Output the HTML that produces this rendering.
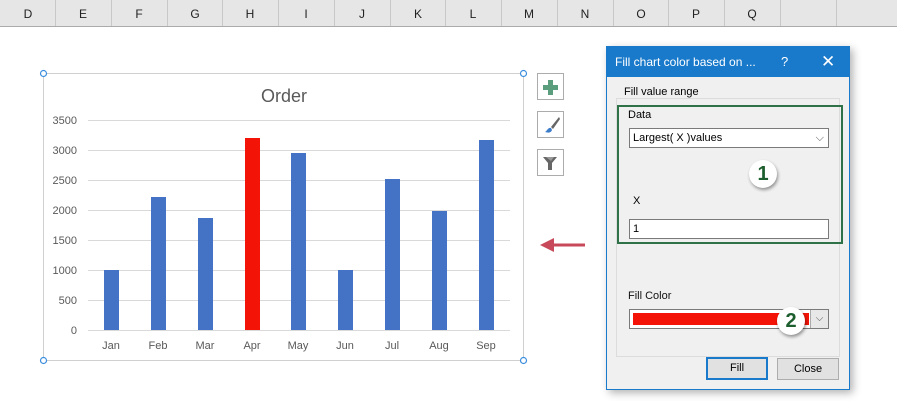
<!DOCTYPE html>
<html><head><style>
body{margin:0;width:897px;height:401px;overflow:hidden;background:#fff;font-family:"Liberation Sans",sans-serif;position:relative}
.a{position:absolute}
</style></head><body>
<div class="a" style="left:0;top:0;width:897px;height:26px;background:#e6e6e6;border-bottom:1px solid #ababab"></div>
<svg class="a" style="left:0;top:0" width="897" height="401">
<g stroke="#c8c8c8">
<line x1="55.5" y1="0" x2="55.5" y2="26"/><line x1="111.5" y1="0" x2="111.5" y2="26"/><line x1="167.5" y1="0" x2="167.5" y2="26"/><line x1="222.5" y1="0" x2="222.5" y2="26"/><line x1="278.5" y1="0" x2="278.5" y2="26"/><line x1="334.5" y1="0" x2="334.5" y2="26"/><line x1="390.5" y1="0" x2="390.5" y2="26"/><line x1="445.5" y1="0" x2="445.5" y2="26"/><line x1="501.5" y1="0" x2="501.5" y2="26"/><line x1="557.5" y1="0" x2="557.5" y2="26"/><line x1="613.5" y1="0" x2="613.5" y2="26"/><line x1="668.5" y1="0" x2="668.5" y2="26"/><line x1="724.5" y1="0" x2="724.5" y2="26"/><line x1="780.5" y1="0" x2="780.5" y2="26"/><line x1="836.5" y1="0" x2="836.5" y2="26"/>
</g>
<g font-size="12" fill="#222" text-anchor="middle">
<text x="28" y="18">D</text><text x="83" y="18">E</text><text x="139" y="18">F</text><text x="195" y="18">G</text><text x="250" y="18">H</text><text x="306" y="18">I</text><text x="362" y="18">J</text><text x="418" y="18">K</text><text x="473" y="18">L</text><text x="529" y="18">M</text><text x="585" y="18">N</text><text x="641" y="18">O</text><text x="696" y="18">P</text><text x="752" y="18">Q</text>
</g>
<rect x="43.5" y="73.5" width="480" height="287" fill="#fff" stroke="#d0d0d0"/>
<g fill="#fff" stroke="#3b8ede" stroke-width="1.2"><circle cx="43.5" cy="73.5" r="3"/><circle cx="523.5" cy="73.5" r="3"/><circle cx="43.5" cy="360.5" r="3"/><circle cx="523.5" cy="360.5" r="3"/></g>
<text x="284" y="102" font-size="18" fill="#595959" text-anchor="middle">Order</text>
<g stroke="#d9d9d9"><line x1="88" y1="120.5" x2="510" y2="120.5"/><line x1="88" y1="150.5" x2="510" y2="150.5"/><line x1="88" y1="180.5" x2="510" y2="180.5"/><line x1="88" y1="210.5" x2="510" y2="210.5"/><line x1="88" y1="240.5" x2="510" y2="240.5"/><line x1="88" y1="270.5" x2="510" y2="270.5"/><line x1="88" y1="300.5" x2="510" y2="300.5"/><line x1="88" y1="330.5" x2="510" y2="330.5"/></g>
<g font-size="11" fill="#595959" text-anchor="end">
<text x="77" y="124">3500</text><text x="77" y="154">3000</text><text x="77" y="184">2500</text><text x="77" y="214">2000</text><text x="77" y="244">1500</text><text x="77" y="274">1000</text><text x="77" y="304">500</text><text x="77" y="334">0</text></g>
<g fill="#4472c4">
<rect x="104" y="270" width="15" height="60"/><rect x="151" y="197" width="15" height="133"/><rect x="198" y="218" width="15" height="112"/><rect x="291" y="153" width="15" height="177"/><rect x="338" y="270" width="15" height="60"/><rect x="385" y="179" width="15" height="151"/><rect x="432" y="211" width="15" height="119"/><rect x="479" y="140" width="15" height="190"/></g>
<rect x="245" y="138" width="15" height="192" fill="#f41407"/>
<g font-size="11" fill="#595959" text-anchor="middle">
<text x="111" y="349">Jan</text><text x="158" y="349">Feb</text><text x="205" y="349">Mar</text><text x="252" y="349">Apr</text><text x="298" y="349">May</text><text x="345" y="349">Jun</text><text x="392" y="349">Jul</text><text x="439" y="349">Aug</text><text x="486" y="349">Sep</text></g>
<g fill="#fff" stroke="#acacac"><rect x="537.5" y="73.5" width="26" height="26"/><rect x="537.5" y="111.5" width="26" height="26"/><rect x="537.5" y="149.5" width="26" height="26"/></g>
<path d="M548 80h5v5h5v5h-5v5h-5v-5h-5v-5h5z" fill="#5a9e7e"/>
<path d="M559 117l-8 10 2 2 7-10z" fill="#666"/><path d="M545 132c2-1 3-5 6-4l1 2c-1 3-4 3-7 2z" fill="#3d7cc9"/>
<path d="M543 157h14l-5 6v7h-4v-7z" fill="#666"/><path d="M546 157h8l-3 4z" fill="#999"/>
<path d="M585 245H552" stroke="#c84a5a" stroke-width="3"/><path d="M540 245l14-7v14z" fill="#c84a5a"/>
</svg>
<div class="a" style="left:606px;top:46px;width:244px;height:344px;background:#f0f0f0;border:1px solid #1979ca;box-sizing:border-box;box-shadow:3px 3px 8px rgba(0,0,0,.3)">
<div class="a" style="left:0;top:0;width:242px;height:30px;background:#1979ca;color:#fff;font-size:12px;line-height:30px">
<span class="a" style="left:8px">Fill chart color based on ...</span><span class="a" style="left:174px;font-size:13px">?</span><span class="a" style="left:214px;font-size:17px">✕</span></div>
<div class="a" style="left:9px;top:51px;width:222px;height:257px;border:1px solid #dcdcdc"></div>
<div class="a" style="left:14px;top:39px;background:#f0f0f0;padding:0 3px;font-size:11px;color:#000">Fill value range</div>
<div class="a" style="left:10px;top:58px;width:226px;height:139px;border:2px solid #2f7248;box-sizing:border-box"></div>
<div class="a" style="left:21px;top:62px;font-size:11px">Data</div>
<div class="a" style="left:22px;top:81px;width:200px;height:20px;background:#fff;border:1px solid #7a7a7a;box-sizing:border-box;font-size:11px;line-height:18px;padding-left:3px">Largest( X )values<span class="a" style="right:4px;top:0;color:#555">⌵</span></div>
<div class="a" style="left:142px;top:113px;width:28px;height:28px;border-radius:50%;background:#fff;box-shadow:1px 2px 3px rgba(0,0,0,.4);color:#1d5e2e;font-weight:bold;font-size:20px;text-align:center;line-height:28px">1</div>
<div class="a" style="left:26px;top:148px;font-size:11px">X</div>
<div class="a" style="left:22px;top:172px;width:200px;height:20px;background:#fff;border:1px solid #7a7a7a;box-sizing:border-box;font-size:11px;line-height:18px;padding-left:3px">1</div>
<div class="a" style="left:21px;top:243px;font-size:11px;color:#111">Fill Color</div>
<div class="a" style="left:22px;top:262px;width:200px;height:20px;background:#fff;border:1px solid #7a7a7a;box-sizing:border-box">
<div class="a" style="left:3px;top:3px;width:176px;height:12px;background:#f41407"></div>
<div class="a" style="right:0;top:0;width:17px;height:18px;border-left:1px solid #aaa;background:#e8e8e8;font-size:10px;text-align:center;line-height:18px;color:#555">⌵</div></div>
<div class="a" style="left:170px;top:260px;width:28px;height:28px;border-radius:50%;background:#fff;box-shadow:1px 2px 3px rgba(0,0,0,.4);color:#1d5e2e;font-weight:bold;font-size:20px;text-align:center;line-height:28px">2</div>
<div class="a" style="left:99px;top:310px;width:62px;height:23px;border:2px solid #1979ca;box-sizing:border-box;background:#e1e1e1;font-size:11px;text-align:center;line-height:19px">Fill</div>
<div class="a" style="left:170px;top:311px;width:62px;height:22px;border:1px solid #adadad;box-sizing:border-box;background:#e1e1e1;font-size:11px;text-align:center;line-height:20px">Close</div>
</div>
</body></html>
